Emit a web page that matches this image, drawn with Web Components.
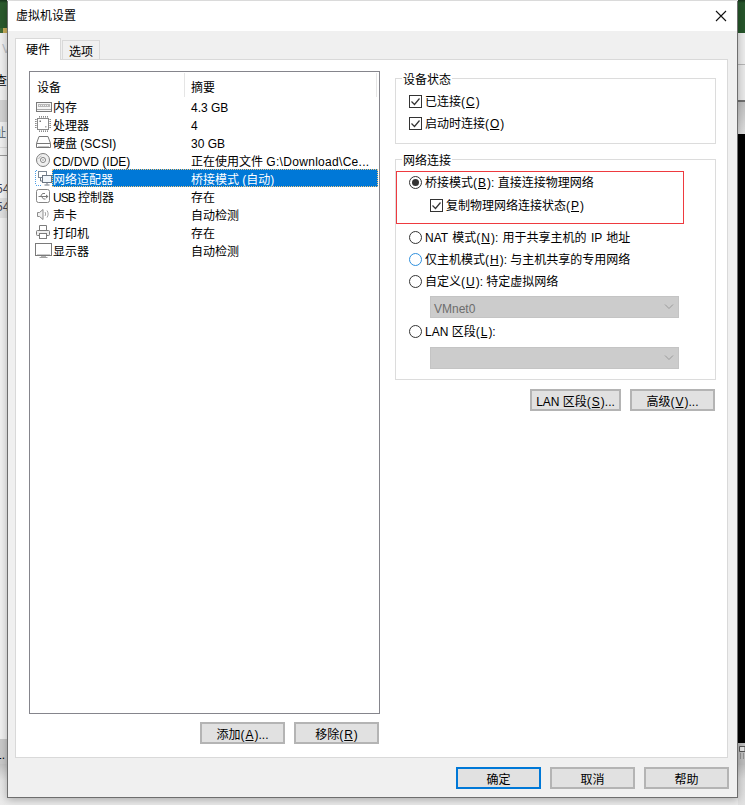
<!DOCTYPE html>
<html lang="zh">
<head>
<meta charset="utf-8">
<title>虚拟机设置</title>
<style>
html,body{margin:0;padding:0;height:100%;overflow:hidden;background:#ececec}
body{font:12px/18px "Liberation Sans","Noto Sans CJK SC",sans-serif;color:#000}
u{text-underline-offset:1px;margin:0 1px}
</style>
</head>
<body>
<vm-desktop>
  <vm-strip slot="left" side="left"></vm-strip>
  <vm-dialog heading="虚拟机设置">
    <vm-tab slot="tabs" active>硬件</vm-tab>
    <vm-tab slot="tabs">选项</vm-tab>

    <vm-device-list slot="list" first="设备" second="摘要">
      <vm-row icon="ram" name="内存">4.3 GB</vm-row>
      <vm-row icon="cpu" name="处理器">4</vm-row>
      <vm-row icon="hdd" name="硬盘 (SCSI)">30 GB</vm-row>
      <vm-row icon="cd" name="CD/DVD (IDE)">正在使用文件 <span style="letter-spacing:.3px">G:\Download\Ce...</span></vm-row>
      <vm-row icon="net" name="网络适配器" selected>桥接模式 (自动)</vm-row>
      <vm-row icon="usb" name="USB 控制器" tight>存在</vm-row>
      <vm-row icon="snd" name="声卡">自动检测</vm-row>
      <vm-row icon="prn" name="打印机">存在</vm-row>
      <vm-row icon="mon" name="显示器">自动检测</vm-row>
    </vm-device-list>
    <vm-button slot="list-actions">添加(<u>A</u>)...</vm-button>
    <vm-button slot="list-actions">移除(<u>R</u>)</vm-button>

    <vm-group slot="side" heading="设备状态" style="height:66px;margin-top:7px">
      <vm-option type="check" checked>已连接(<u>C</u>)</vm-option>
      <vm-option type="check" checked>启动时连接(<u>O</u>)</vm-option>
    </vm-group>
    <vm-group slot="side" heading="网络连接" style="height:221px;margin-top:15px">
      <vm-highlight></vm-highlight>
      <vm-option type="radio" checked>桥接模式(<u>B</u>): 直接连接物理网络</vm-option>
      <vm-option type="check" checked indent style="margin-top:1px;margin-bottom:10px">复制物理网络连接状态(<u>P</u>)</vm-option>
      <vm-option type="radio" style="word-spacing:1px">NAT 模式(<u>N</u>): 用于共享主机的 IP 地址</vm-option>
      <vm-option type="radio" focused>仅主机模式(<u>H</u>): 与主机共享的专用网络</vm-option>
      <vm-option type="radio">自定义(<u>U</u>): 特定虚拟网络</vm-option>
      <vm-select style="margin-top:4px;margin-bottom:2px">VMnet0</vm-select>
      <vm-option type="radio">LAN 区段(<u>L</u>):</vm-option>
      <vm-select style="margin-top:5px"></vm-select>
    </vm-group>
    <vm-button slot="side-actions" style="width:91px">LAN 区段(<u>S</u>)...</vm-button>
    <vm-button slot="side-actions">高级(<u>V</u>)...</vm-button>

    <vm-button slot="footer" primary>确定</vm-button>
    <vm-button slot="footer">取消</vm-button>
    <vm-button slot="footer">帮助</vm-button>
  </vm-dialog>
  <vm-strip slot="right" side="right"></vm-strip>
</vm-desktop>

<script>
function shadow(el, html){
  const r = el.attachShadow({mode:'open'});
  r.innerHTML = html;
  return r;
}
customElements.define('vm-desktop', class extends HTMLElement{
  constructor(){super();shadow(this,`<style>
    :host{display:grid;grid-template-columns:7px 731px 7px;width:745px;height:805px;overflow:hidden;background:#ececec}
  </style><slot name="left"></slot><slot></slot><slot name="right"></slot>`);}
});
customElements.define('vm-strip', class extends HTMLElement{
  constructor(){super();
    const left = this.getAttribute('side')==='left';
    const b=(h,bg,t='',c='#000')=>`<div style="height:${h}px;background:${bg};color:${c}">${t}</div>`;
    const body = left ? [
      b(28,'linear-gradient(#16301a 0,#2b5a2d 3px,#2b5a2d)'),
      b(5,'linear-gradient(90deg,#3f6b35 50%,#c9ae5a 50%)'),
      b(7,'#f0f0f0'),b(22,'#f0f0f0','<span style="margin-left:2px">V</span>','#b9bec6'),
      b(10,'#f0f0f0'),b(20,'#f0f0f0','<span style="margin-left:-5px">查看</span>'),
      b(8,'#f0f0f0'),
      b(22,'#d3d3d3'),
      b(2,'#f0f0f0'),b(18,'#f0f0f0','<span style="margin-left:-6px">址</span>','#66707a'),
      b(5,'#f0f0f0'),b(1,'#d8d8d8'),b(7,'#f0f0f0'),b(1,'#9a9a9a'),
      b(24,'#f3f3f3'),b(17,'#f3f3f3','<span style="margin-left:-4px">54</span>','#445'),
      b(1,'#f3f3f3'),b(20,'#e0e0e0','<span style="margin-left:-4px">54</span>','#445'),
      b(521,'#f1f1f1'),
      b(7,'#c9c9c9'),b(18,'#c9c9c9','<span style="margin-left:-5px">1.</span>'),
      b(42,'linear-gradient(#c4c4c4,#e6e6e6 40%,#ececec)')
    ] : [
      b(33,'linear-gradient(#16301a 0,#26562b 3px,#26562b)'),
      b(31,'#ececec'),b(1,'#b5b5b5'),b(35,'#e9e9e9'),b(2,'#707070'),
      b(32,'linear-gradient(#bfbfbf,#dedede)'),
      b(609,'#000'),
      `<div style="height:22px;background:#bdbdbd;padding:2px 0 0 1px;box-sizing:border-box"><svg width="6" height="14" viewBox="0 0 6 14" style="display:block"><path d="M.5 1.5h5.5v5H.5z" fill="#e4e4e4" stroke="#555"/><path d="M1 9h1M4 9h1M1 11h1M4 11h1M1 13h1M4 13h1" stroke="#666"/></svg></div>`,
      b(40,'linear-gradient(#c0c0c0,#dadada 35%,#e2e2e2)')
    ];
    shadow(this,`<style>
      :host{display:block;overflow:hidden;font-size:12px;line-height:18px;white-space:nowrap}
      div{overflow:hidden}
      span{display:inline-block}
    </style>${body.join('')}`);
  }
});
customElements.define('vm-dialog', class extends HTMLElement{
  constructor(){super();
    shadow(this,`<style>
      :host{display:flex;flex-direction:column;box-sizing:border-box;height:797px;margin-top:1px;position:relative;z-index:1;
        background:#f0f0f0;border:solid #6e6e6e;border-width:0 1px 1px;box-shadow:0 2px 8px rgba(0,0,0,.28)}
      .title{flex:none;height:30px;background:#fff;display:flex;align-items:center;justify-content:space-between;padding:0 10px 0 8px;font-size:12px}
      .close{display:block}
      .body{flex:1;display:flex;flex-direction:column;padding:7px 9px 0 7px;min-height:0}
      .tabs{flex:none;height:22px;display:flex;align-items:flex-end;margin-bottom:-1px;position:relative;z-index:1}
      .panel{flex:1;min-height:0;background:#fff;border:1px solid #d9d9d9;padding:11px 11px 13px 13px;display:grid;grid-template-columns:351px 321px;column-gap:15px}
      .col{display:flex;flex-direction:column;min-height:0}
      .list{flex:1;min-height:0;display:flex;flex-direction:column}
      .actions{flex:none;display:flex;justify-content:flex-end;gap:9px;padding-right:1px}
      .actions.a{margin-top:8px}
      .actions.b{margin-top:9px}
      .footer{flex:none;height:39px;box-sizing:border-box;padding-top:9px;margin-right:-1px;display:flex;justify-content:flex-end;gap:9px}
    </style>
    <div class="title"><span>${this.getAttribute('heading')}</span>
      <svg class="close" width="12" height="12" viewBox="0 0 12 12"><path d="M1 1l10 10M11 1L1 11" stroke="#111" stroke-width="1.1" fill="none"/></svg>
    </div>
    <div class="body">
      <div class="tabs"><slot name="tabs"></slot></div>
      <div class="panel">
        <div class="col">
          <div class="list"><slot name="list"></slot></div>
          <div class="actions a"><slot name="list-actions"></slot></div>
        </div>
        <div class="col">
          <slot name="side"></slot>
          <div class="actions b"><slot name="side-actions"></slot></div>
        </div>
      </div>
      <div class="footer"><slot name="footer"></slot></div>
    </div>`);
  }
});
customElements.define('vm-tab', class extends HTMLElement{
  constructor(){super();shadow(this,`<style>
    :host{display:block;box-sizing:border-box;height:19px;width:38px;margin-left:1px;margin-bottom:1px;padding-top:2px;border:1px solid #d9d9d9;border-bottom:0;background:#f0f0f0;text-align:center;line-height:18px}
    :host([active]){height:22px;width:46px;margin:0;padding-top:0;background:#fff;line-height:22px;padding-bottom:1px}
  </style><slot></slot>`);}
});
customElements.define('vm-device-list', class extends HTMLElement{
  constructor(){super();shadow(this,`<style>
    :host{display:flex;flex-direction:column;flex:1;box-sizing:border-box;height:100%;background:#fff;border:1px solid #85858c}
    .head{flex:none;height:24px;margin-top:1px;display:flex}
    .c1{box-sizing:border-box;width:155px;padding:6px 0 0 7px;border-right:1px solid #e5e5e5}
    .c2{box-sizing:border-box;width:192px;padding:6px 0 0 6px;border-right:1px solid #e5e5e5}
  </style>
  <div class="head"><div class="c1">${this.getAttribute('first')}</div><div class="c2">${this.getAttribute('second')}</div></div>
  <slot></slot>`);}
});
const ICONS={
ram:`<rect x="1.5" y="4.5" width="15" height="9" fill="#f6f6f6" stroke="#7a7a7a"/><rect x="3" y="6" width="12" height="3" fill="#b8b8b8"/><path d="M4 7.500h1M6 7.500h1M8 7.500h1M10 7.500h1M12 7.500h1" stroke="#eee"/><path d="M2 11.500h14" stroke="#a8a8a8"/>`,
cpu:`<path d="M4 .5h9M4 15.500h9M.5 3v10M15.500 3v10" stroke="#8c8c8c" stroke-dasharray="1 1" fill="none"/><path d="M4 1.500h9M4 14.500h9M1.500 3v10M14.500 3v10" stroke="#b5b5b5" stroke-dasharray="1 1" fill="none"/><rect x="2.500" y="2.500" width="11" height="11" fill="#fff" stroke="#8a8a8a"/><rect x="4.500" y="4.500" width="1.500" height="1.500" fill="#777"/><rect x="10" y="10" width="1.500" height="1.500" fill="#aaa"/>`,
hdd:`<path d="M1.500 9.500l2.500-7h9l2.500 7v4h-14z" fill="#fff" stroke="#777"/><path d="M1.500 9.500h14" stroke="#777"/><path d="M3 12.500h11" stroke="#c4c4c4"/>`,
cd:`<circle cx="8" cy="8" r="6.500" fill="#efefef" stroke="#7f7f7f"/><circle cx="8" cy="8" r="2.500" fill="#fff" stroke="#7f7f7f"/><circle cx="8" cy="8" r=".8" fill="#888"/><path d="M3.500 7a4.800 4.800 0 0 1 3-3" stroke="#bbb" fill="none"/>`,
net:`<rect x="3.500" y="1.500" width="8" height="6" fill="#fff" stroke="#7b8794"/><rect x="7.500" y="5.500" width="9" height="7" fill="#f1f6fb" stroke="#6a7582"/><path d="M5.500 8v3h2M12 13v1.500M9.500 15h5" stroke="#6a7582" fill="none"/><path d="M.5 1v14M1 .5h2M1 15.500h5" stroke="#4d9fe6" stroke-dasharray="1 1"/>`,
usb:`<rect x="1.500" y="1.500" width="13" height="13" rx="2" fill="#fff" stroke="#858585"/><path d="M3.500 8.500h8M5.500 8.500l2-3h2.500M6.500 8.500l2 2.500h2" stroke="#7a7a7a" fill="none"/><path d="M11 6.500v4l2.500-2z" fill="#7a7a7a"/>`,
snd:`<path d="M2.500 6.500h2l3.500-3v10l-3.500-3h-2z" fill="#f2f2f2" stroke="#8c8c8c"/><path d="M10 6c.8 1 .8 3 0 4M12 4.500c1.500 2 1.500 5 0 7" stroke="#a4a4a4" fill="none"/>`,
prn:`<path d="M4.500 6V1.500h7V6" fill="#fff" stroke="#7c7c7c"/><rect x="1.500" y="6.500" width="13" height="5" rx="1" fill="#efefef" stroke="#7c7c7c"/><rect x="4.500" y="9.500" width="7" height="5" fill="#fff" stroke="#7c7c7c"/>`,
mon:`<rect x=".5" y="1.500" width="16" height="12" fill="#fff" stroke="#7a7a7a"/><path d="M2 12.500h13" stroke="#ccc"/><path d="M6 14h5v1H6z" fill="#b4b4b4"/><path d="M4.500 15.500h8" stroke="#a0a0a0"/>`};
customElements.define('vm-row', class extends HTMLElement{
  constructor(){super();
    const name=this.getAttribute('name');
    const label=this.hasAttribute('tight')?name.replace(/^(\S+)/,'<span style="letter-spacing:-1px">$1</span>'):name;
    shadow(this,`<style>
    :host{display:flex;height:18px;padding-left:5px;line-height:18px;white-space:nowrap}
    svg{flex:none;display:block;margin-top:1px}
    .band{flex:1;display:flex;margin-right:1px}
    :host([selected]) .band{background:#0078d7;color:#fff;outline:1px dotted #f5c77e;outline-offset:-1px}
    .n{width:133px;box-sizing:border-box;padding:2px 0 0 1px}
    .s{padding:2px 0 0 6px}
  </style>
  <svg width="17" height="16" viewBox="0 0 17 16">${ICONS[this.getAttribute('icon')]}</svg>
  <div class="band"><div class="n">${label}</div><div class="s"><slot></slot></div></div>`);}
});
customElements.define('vm-group', class extends HTMLElement{
  constructor(){super();shadow(this,`<style>
    :host{display:block;flex:none;box-sizing:border-box;position:relative;border:1px solid #dcdcdc;background:#fff;padding:0 0 0 13px}
    .legend{width:max-content;margin:-7px 0 1px -7px;padding:0 1px;background:#fff;height:17px;line-height:17px}
  </style><div class="legend">${this.getAttribute('heading')}</div><slot></slot>`);}
});
customElements.define('vm-highlight', class extends HTMLElement{
  constructor(){super();shadow(this,`<style>
    :host{display:block;position:absolute;left:0;top:11px;width:288px;height:53px;box-sizing:border-box;border:1px solid #ee3a3f;pointer-events:none}
  </style>`);}
});
customElements.define('vm-option', class extends HTMLElement{
  constructor(){super();
    const radio=this.getAttribute('type')==='radio';
    const checked=this.hasAttribute('checked');
    const ring=this.hasAttribute('focused')?'#2f8fdc':'#333';
    const mark = radio
      ? `<svg width="13" height="13" viewBox="0 0 13 13"><circle cx="6.500" cy="6.500" r="6" fill="#fff" stroke="${ring}"/>${checked?'<circle cx="6.500" cy="6.500" r="3.500" fill="#333"/>':''}</svg>`
      : `<svg width="13" height="13" viewBox="0 0 13 13"><rect x=".5" y=".5" width="12" height="12" fill="#fff" stroke="#333"/>${checked?'<path d="M2.500 6.500l3 3 5-6" fill="none" stroke="#333" stroke-width="1.200"/>':''}</svg>`;
    shadow(this,`<style>
      :host{display:flex;align-items:center;height:22px;gap:3px;white-space:nowrap}
      :host([indent]){margin-left:21px}
      svg{flex:none;display:block}
      span{padding-top:2px}
    </style>${mark}<span><slot></slot></span>`);
  }
});
customElements.define('vm-select', class extends HTMLElement{
  constructor(){super();shadow(this,`<style>
    :host{display:flex;align-items:center;justify-content:space-between;box-sizing:border-box;width:249px;height:22px;margin-left:21px;padding:0 4px 0 3px;background:#cccccc;border:1px solid #c4c4c4;color:#6d6d6d}
    span{padding-top:4px}
    svg{display:block}
  </style><span><slot></slot></span><svg width="10" height="6" viewBox="0 0 10 6"><path d="M1 .5l4 4 4-4" fill="none" stroke="#9a9a9a"/></svg>`);}
});
customElements.define('vm-button', class extends HTMLElement{
  constructor(){super();shadow(this,`<style>
    :host{display:flex;align-items:center;justify-content:center;flex:none;box-sizing:border-box;width:85px;height:22px;padding-top:3px;background:#e1e1e1;border:2px solid #b4b4b4;white-space:nowrap;line-height:14px}
    :host([primary]){border-color:#0078d7}
  </style><span><slot></slot></span>`);}
});
</script>
</body>
</html>
